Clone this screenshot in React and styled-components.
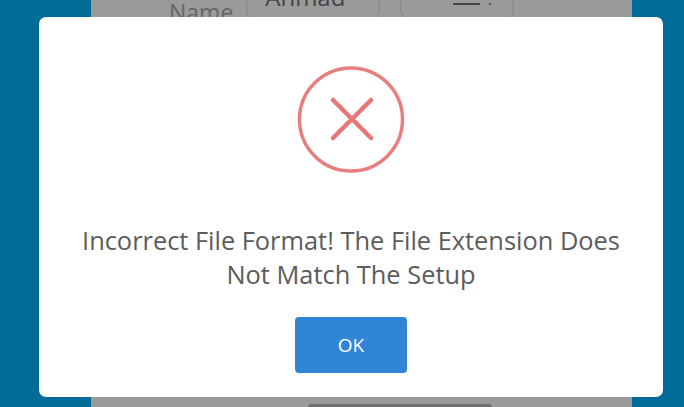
import React from "react";
import styled, { createGlobalStyle } from "styled-components";

const GlobalStyle = createGlobalStyle`
  html, body {
    margin: 0;
    padding: 0;
    overflow: hidden;
  }
`;

const Page = styled.div`
  position: relative;
  width: 684px;
  height: 407px;
  overflow: hidden;
  background-color: #006b96;
  font-family: "Open Sans", "Liberation Sans", sans-serif;
`;

const Sheet = styled.div`
  position: relative;
  display: flow-root;
  width: 541px;
  height: 407px;
  margin-left: 91px;
  background-color: #9a9a9a;
`;

const NameRow = styled.div`
  display: flex;
  align-items: center;
  gap: 13px;
  height: 40px;
  margin-top: -9px;
  padding-left: 78px;
`;

const NameLabel = styled.span`
  font-size: 23px;
  color: #666;
  margin-top: 2px;
`;

const Pill = styled.div`
  display: flex;
  justify-content: center;
  align-items: flex-end;
  width: ${(props) => props.$width}px;
  height: 46px;
  margin-left: ${(props) => props.$gap || 0}px;
  margin-top: -9px;
  padding-bottom: 20px;
  padding-right: ${(props) => props.$inset || 0}px;
  border: 1px solid #858585;
  border-radius: 23px;
  box-sizing: border-box;
  font-size: 24px;
  line-height: 24px;
  color: #444;
`;

const PillMark = styled.span`
  position: relative;
  display: block;
  width: 27px;
  height: 2px;
  margin-left: 19px;
  margin-bottom: 4px;
  background-color: #444;

  &::after {
    content: "";
    position: absolute;
    left: 36px;
    top: 0;
    width: 2px;
    height: 2px;
    background-color: #555;
  }
`;

const BottomBar = styled.div`
  position: absolute;
  left: 217px;
  bottom: -4px;
  width: 184px;
  height: 7px;
  border-radius: 4px;
  background-color: #6e6e6e;
`;

const Modal = styled.div`
  position: absolute;
  left: 39px;
  top: 17px;
  box-sizing: border-box;
  width: 624px;
  height: 380px;
  padding-top: 49px;
  display: flex;
  flex-direction: column;
  align-items: center;
  background-color: #fff;
  border-radius: 7px;
`;

const ErrorIcon = styled.svg`
  display: block;
  width: 108px;
  height: 108px;
`;

const Message = styled.p`
  width: 550px;
  margin: 49px 0 0;
  text-align: center;
  font-size: 25.4px;
  line-height: 34px;
  color: #5c5c5c;
`;

const OkButton = styled.button`
  width: 112px;
  height: 56px;
  margin-top: 26px;
  border: none;
  border-radius: 4px;
  background-color: #3085d6;
  color: #fff;
  font-family: inherit;
  font-size: 19px;
`;

export default function App() {
  return (
    <Page>
      <GlobalStyle />
      <Sheet>
        <NameRow>
          <NameLabel>Name</NameLabel>
          <Pill $width={134} $inset={16}>Ahmad</Pill>
          <Pill $width={114} $gap={7}>
            <PillMark />
          </Pill>
        </NameRow>
        <BottomBar />
      </Sheet>
      <Modal>
        <ErrorIcon viewBox="0 0 108 108">
          <circle cx="54" cy="53.5" r="51.5" fill="none" stroke="#e87f7f" strokeWidth="3.5" />
          <path
            d="M36 34 L74 72 M74 34 L36 72"
            fill="none"
            stroke="#e97676"
            strokeWidth="4.5"
            strokeLinecap="round"
          />
        </ErrorIcon>
        <Message>Incorrect File Format! The File Extension Does Not Match The Setup</Message>
        <OkButton>OK</OkButton>
      </Modal>
    </Page>
  );
}
